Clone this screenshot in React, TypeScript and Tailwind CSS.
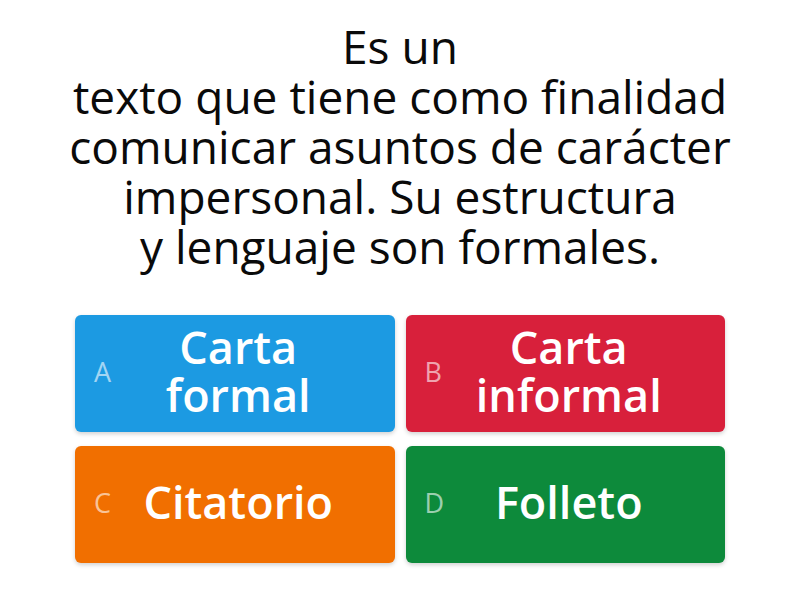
import React from "react";

const answers = [
  { letter: "A", lines: ["Carta", "formal"], bg: "bg-[#1c9ae2]" },
  { letter: "B", lines: ["Carta", "informal"], bg: "bg-[#d8203b]" },
  { letter: "C", lines: ["Citatorio"], bg: "bg-[#f16f00]" },
  { letter: "D", lines: ["Folleto"], bg: "bg-[#0d8a3b]" },
];

export default function App() {
  return (
    <div
      className="w-[800px] h-[600px] bg-white flex flex-col"
      style={{ fontFamily: '"Open Sans", "Noto Sans", sans-serif' }}
    >
      <div className="pt-[21px] text-center text-[46px] leading-[50px] text-[#0a0a0a]">
        <div>Es un</div>
        <div>texto que tiene como finalidad</div>
        <div>comunicar asuntos de carácter</div>
        <div>impersonal. Su estructura</div>
        <div>y lenguaje son formales.</div>
      </div>
      <div className="mt-[44px] mx-[75px] grid grid-cols-2 gap-x-[11px] gap-y-[14px]">
        {answers.map((a) => (
          <div
            key={a.letter}
            className={`${a.bg} h-[117px] rounded-[6px] flex items-center shadow-[0_2px_4px_rgba(0,0,0,0.18)]`}
          >
            <div className="w-[60px] pl-[19px] text-[27px] text-white/60 shrink-0 pb-[2px]">{a.letter}</div>
            <div className="flex-1 pr-[53px] pb-[6px] text-center text-white font-semibold text-[45px] leading-[48px]">
              {a.lines.map((l) => (
                <div key={l}>{l}</div>
              ))}
            </div>
          </div>
        ))}
      </div>
    </div>
  );
}
